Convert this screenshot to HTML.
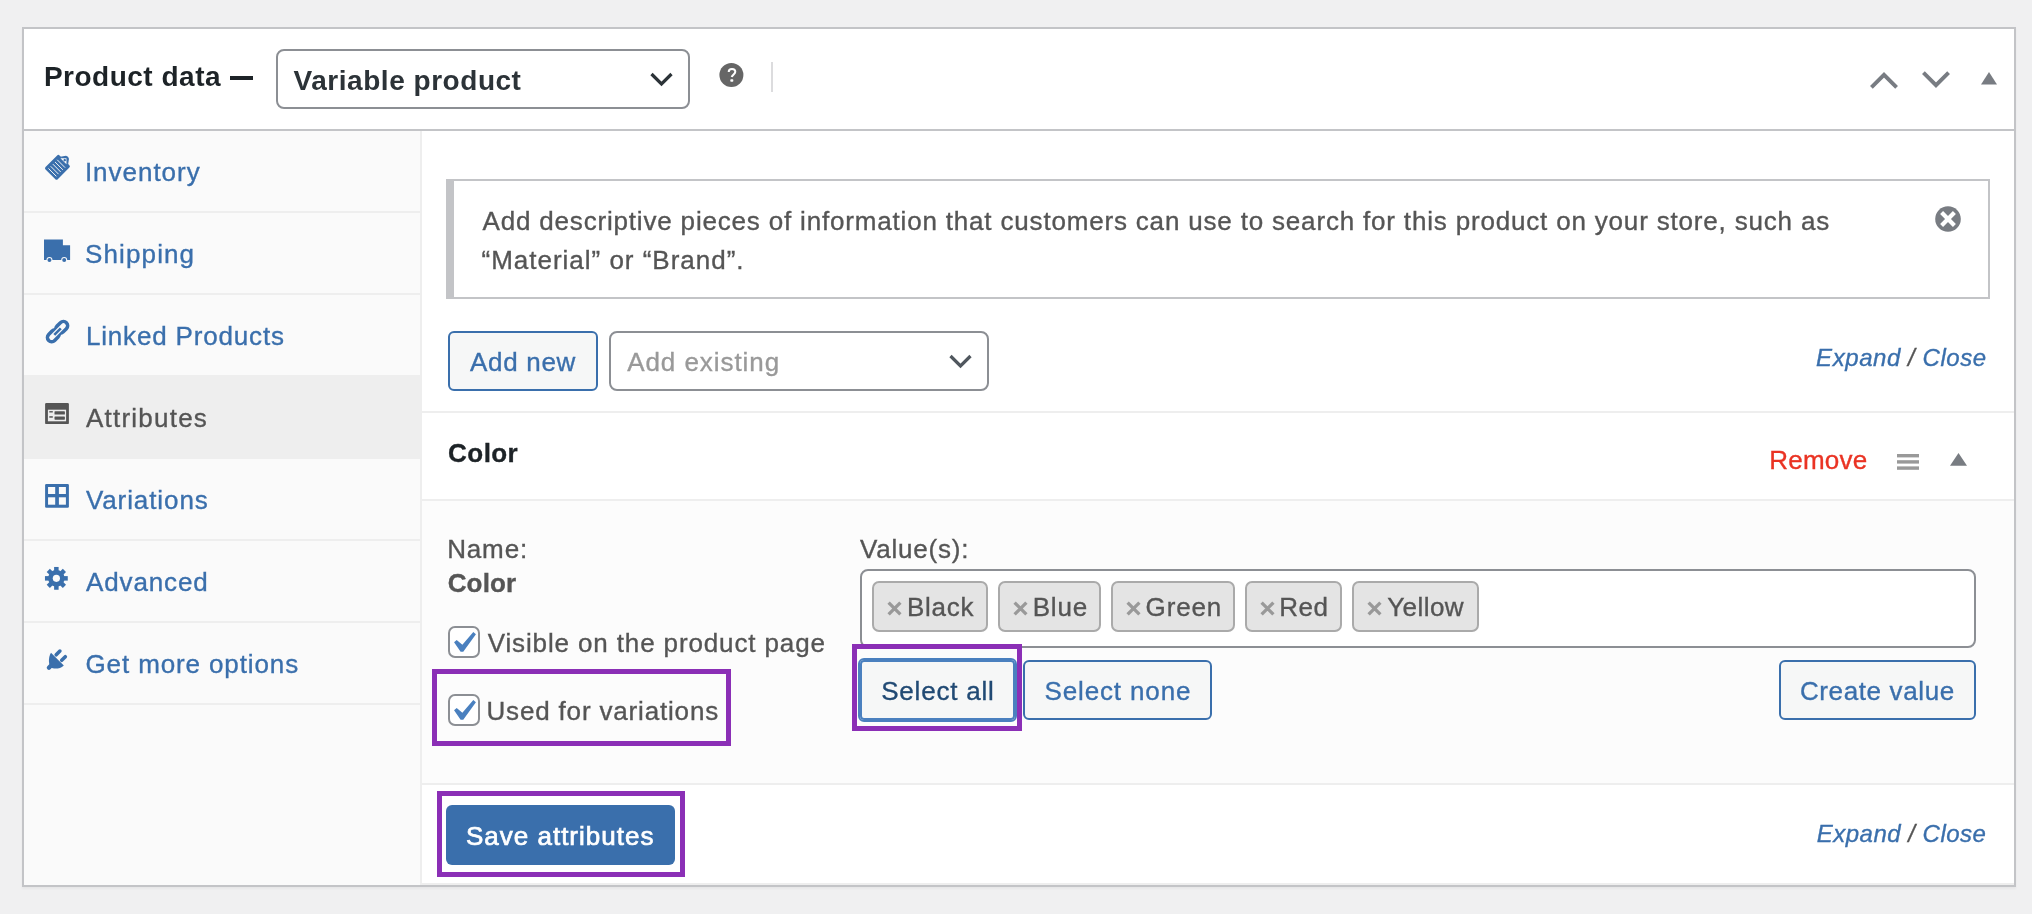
<!DOCTYPE html>
<html><head><meta charset="utf-8">
<style>
*{box-sizing:border-box;margin:0;padding:0}
body{will-change:transform}
html,body{width:2032px;height:914px;overflow:hidden;background:#f0f0f1;font-family:"Liberation Sans",sans-serif}
.a{position:absolute}
.t{position:absolute;white-space:nowrap;line-height:1;-webkit-text-stroke:0.35px currentColor}
#box{left:22px;top:27px;width:1994px;height:860px;border:2px solid #c3c4c7;background:#fff;box-shadow:0 2px 2px rgba(0,0,0,.04)}
#hdr-line{left:24px;top:129px;width:1990px;height:2px;background:#c3c4c7}
#side{left:24px;top:131px;width:398px;height:754px;background:#fafafa;border-right:2px solid #eee}
.tabsep{position:absolute;left:24px;width:396px;height:2px;background:#eee}
.tab{font-size:26px;color:#3a6fac}
.btn{position:absolute;border:2px solid #3a6fac;background:#f6f7f7;border-radius:6px}
.sel{position:absolute;border:2px solid #8c8f94;background:#fff;border-radius:8px}
.purple{position:absolute;border:5px solid #8b2fb6}
.chip{position:absolute;top:581px;height:51px;border:2px solid #aaa;background:#e4e4e4;border-radius:7px}
.chip .x{position:absolute;top:18px;width:15px;height:15px}
.chip .ct{position:absolute;-webkit-text-stroke:0.35px currentColor;top:12px;font-size:26px;line-height:1;color:#555;white-space:nowrap}
</style></head><body>
<div class="a" id="box"></div>
<div class="a" id="hdr-line"></div>

<!-- header -->
<div id="t0" class="t" style="left:43.9px;top:63px;font-size:28px;font-weight:bold;color:#1d2327;letter-spacing:0.50px;-webkit-text-stroke:0">Product data</div>
<div class="a" style="left:230px;top:76px;width:23px;height:4px;background:#1d2327"></div>
<div class="sel" style="left:276px;top:49px;width:414px;height:60px"></div>
<div id="t1" class="t" style="left:293.6px;top:67px;font-size:28px;font-weight:bold;color:#2c3338;letter-spacing:0.53px;-webkit-text-stroke:0">Variable product</div>
<svg class="a" style="left:650px;top:72px" width="24" height="16" viewBox="0 0 24 16"><path d="M1.5 2 L11.5 12 L21.5 2" fill="none" stroke="#2c3338" stroke-width="3.2"/></svg>
<svg class="a" style="left:719px;top:63px" width="25" height="25" viewBox="0 0 25 25"><circle cx="12.4" cy="12" r="12" fill="#666"/><path d="M9.7,9 C9.7,6.9 11.2,5.9 13,5.9 C14.9,5.9 16.3,7.1 16.3,8.8 C16.3,11 13.4,11.6 12.7,14" fill="none" stroke="#fff" stroke-width="2"/><rect x="11.3" y="16.2" width="3" height="2.6" rx=".7" fill="#fff"/></svg>
<div class="a" style="left:771px;top:62px;width:2px;height:30px;background:#dcdcde"></div>
<svg class="a" style="left:1868px;top:70px" width="32" height="20" viewBox="0 0 32 20"><path d="M3.4 17.4 L16 4.8 L28.6 17.4" fill="none" stroke="#787c82" stroke-width="3.9"/></svg>
<svg class="a" style="left:1920px;top:70px" width="32" height="20" viewBox="0 0 32 20"><path d="M3.4 2.6 L16 15.2 L28.6 2.6" fill="none" stroke="#787c82" stroke-width="3.9"/></svg>
<svg class="a" style="left:1980px;top:72px" width="18" height="13" viewBox="0 0 18 13"><path d="M1 12.5 L9 0 L17 12.5 Z" fill="#787c82"/></svg>

<!-- sidebar -->
<div class="a" id="side"></div>
<div class="tabsep" style="top:211px"></div>
<div class="tabsep" style="top:293px"></div>
<div class="a" style="left:24px;top:375px;width:398px;height:84px;background:#eee"></div>
<div class="tabsep" style="top:539px"></div>
<div class="tabsep" style="top:621px"></div>
<div class="tabsep" style="top:703px"></div>

<!-- icons -->
<svg class="a" style="left:40px;top:150px" width="36" height="34" viewBox="0 0 36 34"><g transform="translate(17.45,17.3) rotate(45) scale(1.06)" fill="#3a6fac"><rect x="-8.15" y="-9.35" width="16.3" height="18.7" rx="1.6"/><path d="M-5.2,-9 L-2,-13.4 Q0,-14.8 2,-13.4 L5.2,-9 Z"/><path d="M-4,-8 L0,-12 L4,-8 Z" fill="#fafafa"/><circle cx="0" cy="-9.7" r="1.2"/><g stroke="#fafafa" stroke-width="0.85"><path d="M-5.2,6.75 H5.3 M-5.2,3.85 H5.3 M-5.2,0.95 H5.3 M-5.2,-1.95 H5.3 M-5.2,-4.85 H5.3"/></g></g></svg>
<svg class="a" style="left:40px;top:234px" width="36" height="32" viewBox="0 0 36 32"><path fill="#3a6fac" d="M4,5.6 H22.9 V11.2 H30.1 V25.9 H27.2 A3,3 0 0 0 21.2,25.9 H12.45 A3,3 0 0 0 6.45,25.9 H4 Z"/><circle cx="9.45" cy="25.9" r="2" fill="#3a6fac"/><circle cx="24.2" cy="25.9" r="2" fill="#3a6fac"/></svg>
<svg class="a" style="left:40px;top:315px" width="36" height="34" viewBox="0 0 36 34"><g transform="translate(17.55,16.55) rotate(-45)" fill="#3a6fac"><rect x="-14.3" y="-6" width="16.8" height="12" rx="6"/><rect x="-2.5" y="-6" width="16.8" height="12" rx="6"/><rect x="-10.8" y="-2.5" width="21.6" height="5" rx="2.5" fill="#fafafa"/><rect x="-4.6" y="-1.3" width="9.2" height="2.6"/></g></svg>
<svg class="a" style="left:40px;top:398px" width="36" height="32" viewBox="0 0 36 32"><rect x="5.1" y="5.1" width="23.8" height="21" rx="1.2" fill="#555"/><rect x="7.9" y="11.7" width="18.2" height="11.6" fill="#eee"/><g fill="#555"><rect x="9.3" y="13.1" width="3.5" height="1.4"/><rect x="9.3" y="18.2" width="3.5" height="1.5"/><rect x="14.5" y="13.3" width="10.4" height="3.3" rx=".6"/><rect x="14.5" y="18.4" width="10.4" height="3.3" rx=".6"/></g></svg>
<svg class="a" style="left:40px;top:480px" width="36" height="32" viewBox="0 0 36 32"><rect x="5.1" y="4" width="23.8" height="23.8" rx="1.2" fill="#3a6fac"/><g fill="#fafafa"><rect x="8.05" y="7" width="7.15" height="7"/><rect x="18.9" y="7" width="7" height="7"/><rect x="8.05" y="17.3" width="7.15" height="7.4"/><rect x="18.9" y="17.3" width="7" height="7.4"/></g></svg>
<svg class="a" style="left:40px;top:562px" width="36" height="34" viewBox="0 0 36 34"><g transform="translate(16.36,16.36)" fill="#3a6fac"><circle r="8.3"/><rect x="-2.25" y="-11.4" width="4.5" height="22.8"/><rect x="-2.25" y="-11.4" width="4.5" height="22.8" transform="rotate(45)"/><rect x="-2.25" y="-11.4" width="4.5" height="22.8" transform="rotate(90)"/><rect x="-2.25" y="-11.4" width="4.5" height="22.8" transform="rotate(135)"/><circle r="3.6" fill="#fafafa"/></g></svg>
<svg class="a" style="left:40px;top:644px" width="36" height="32" viewBox="0 0 36 32"><g fill="#3a6fac"><path d="M11,8.8 L23.8,21.4 C20,25 14,25.5 10.3,23.2 C8.2,19 8.6,12.5 11,8.8 Z"/></g><g stroke="#3a6fac" stroke-linecap="round" fill="none"><path d="M10.6,22 L8.9,23.8" stroke-width="4.3"/><path d="M16.2,10.8 L19.9,7.1 M21.7,16.3 L25.3,12.7" stroke-width="3.6"/></g></svg>

<div id="t2" class="t tab" style="left:84.9px;top:159px;letter-spacing:0.98px">Inventory</div>
<div id="t3" class="t tab" style="left:85.1px;top:241px;letter-spacing:1.11px">Shipping</div>
<div id="t4" class="t tab" style="left:85.9px;top:323px;letter-spacing:0.83px">Linked Products</div>
<div id="t5" class="t tab" style="left:86.0px;top:405px;color:#555;letter-spacing:1.22px">Attributes</div>
<div id="t6" class="t tab" style="left:85.9px;top:487px;letter-spacing:0.91px">Variations</div>
<div id="t7" class="t tab" style="left:86.0px;top:569px;letter-spacing:0.86px">Advanced</div>
<div id="t8" class="t tab" style="left:85.5px;top:651px;letter-spacing:0.88px">Get more options</div>

<!-- main -->
<div class="a" style="left:446px;top:179px;width:1544px;height:120px;border:2px solid #c3c4c7;border-left:8px solid #c3c4c7;background:#fff"></div>
<div id="t9" class="t" style="left:482.5px;top:208px;font-size:26px;color:#555;letter-spacing:0.82px">Add descriptive pieces of information that customers can use to search for this product on your store, such as</div>
<div id="t10" class="t" style="left:481.5px;top:247px;font-size:26px;color:#555;letter-spacing:0.99px">“Material” or “Brand”.</div>
<svg class="a" style="left:1935px;top:206px" width="26" height="26" viewBox="0 0 26 26"><circle cx="13" cy="13" r="12.8" fill="#787c82"/><path d="M6.6 6.6 L19.4 19.4 M19.4 6.6 L6.6 19.4" stroke="#fff" stroke-width="4.2"/></svg>

<div class="btn" style="left:448px;top:331px;width:150px;height:60px"></div>
<div id="t11" class="t" style="left:470.0px;top:349px;font-size:26px;color:#3a6fac;letter-spacing:0.70px">Add new</div>
<div class="sel" style="left:609px;top:331px;width:380px;height:60px"></div>
<div id="t12" class="t" style="left:627.2px;top:349px;font-size:26px;color:#999;letter-spacing:0.94px">Add existing</div>
<svg class="a" style="left:949px;top:354px" width="24" height="16" viewBox="0 0 24 16"><path d="M1.5 2 L11.5 12 L21.5 2" fill="none" stroke="#50575e" stroke-width="3.2"/></svg>

<div id="t13" class="t" style="left:1816.1px;top:346px;font-size:24px;font-style:italic;color:#3a6fac;letter-spacing:0.56px">Expand <span style="color:#555">/</span> Close</div>

<div class="a" style="left:422px;top:411px;width:1592px;height:2px;background:#eee"></div>
<div class="a" style="left:422px;top:501px;width:1592px;height:282px;background:#fcfcfc"></div>
<div class="a" style="left:422px;top:499px;width:1592px;height:2px;background:#eee"></div>
<div class="a" style="left:422px;top:783px;width:1592px;height:2px;background:#eee"></div>

<div id="t14" class="t" style="left:448.1px;top:440px;font-size:26px;font-weight:bold;color:#1d2327;letter-spacing:0.44px">Color</div>
<div id="t15" class="t" style="left:1769.3px;top:447px;font-size:26px;color:#ea3323;letter-spacing:0.22px">Remove</div>
<svg class="a" style="left:1897px;top:454px" width="22" height="16" viewBox="0 0 22 16"><rect x="0" y="0" width="22" height="3.4" fill="#999"/><rect x="0" y="6.2" width="22" height="3.4" fill="#999"/><rect x="0" y="12.4" width="22" height="3.4" fill="#999"/></svg>
<svg class="a" style="left:1949px;top:453px" width="19" height="13" viewBox="0 0 19 13"><path d="M1 12.8 L9.5 0 L18 12.8 Z" fill="#787c82"/></svg>

<div id="t16" class="t" style="left:447.2px;top:536px;font-size:26px;color:#555;letter-spacing:0.85px">Name:</div>
<div id="t17" class="t" style="left:447.7px;top:570px;font-size:26px;font-weight:bold;color:#555;letter-spacing:0.16px">Color</div>

<svg class="a" style="left:448px;top:626px" width="33" height="33" viewBox="0 0 33 33"><rect x="1" y="1" width="30" height="30" rx="6" fill="#fff" stroke="#8c8f94" stroke-width="2"/><path d="M6.06,16.34 L8.69,13.94 L14.37,18.75 L25.3,6.06 L27.93,8.25 L15.25,25.75 L12.62,25.75 Z" fill="#4a80bf"/></svg>
<div id="t18" class="t" style="left:487.7px;top:630px;font-size:26px;color:#555;letter-spacing:0.87px">Visible on the product page</div>
<svg class="a" style="left:448px;top:694px" width="33" height="33" viewBox="0 0 33 33"><rect x="1" y="1" width="30" height="30" rx="6" fill="#fff" stroke="#8c8f94" stroke-width="2"/><path d="M6.06,16.34 L8.69,13.94 L14.37,18.75 L25.3,6.06 L27.93,8.25 L15.25,25.75 L12.62,25.75 Z" fill="#4a80bf"/></svg>
<div id="t19" class="t" style="left:486.5px;top:698px;font-size:26px;color:#555;letter-spacing:0.83px">Used for variations</div>

<div id="t20" class="t" style="left:860.1px;top:536px;font-size:26px;color:#555;letter-spacing:0.79px">Value(s):</div>
<div class="sel" style="left:860px;top:569px;width:1116px;height:79px"></div>

<div class="chip" style="left:872px;width:116px"><svg class="x" style="left:13px" viewBox="0 0 15 15"><path d="M1.6 1.6 L13.4 13.4 M13.4 1.6 L1.6 13.4" stroke="#999" stroke-width="3.3"/></svg><div id="t21" class="ct" style="left:33.0px;top:11px;letter-spacing:0.70px">Black</div></div>
<div class="chip" style="left:998px;width:103px"><svg class="x" style="left:13px" viewBox="0 0 15 15"><path d="M1.6 1.6 L13.4 13.4 M13.4 1.6 L1.6 13.4" stroke="#999" stroke-width="3.3"/></svg><div id="t22" class="ct" style="left:32.7px;top:11px;letter-spacing:0.83px">Blue</div></div>
<div class="chip" style="left:1111px;width:124px"><svg class="x" style="left:13px" viewBox="0 0 15 15"><path d="M1.6 1.6 L13.4 13.4 M13.4 1.6 L1.6 13.4" stroke="#999" stroke-width="3.3"/></svg><div id="t23" class="ct" style="left:32.6px;top:11px;letter-spacing:0.86px">Green</div></div>
<div class="chip" style="left:1245px;width:97px"><svg class="x" style="left:13px" viewBox="0 0 15 15"><path d="M1.6 1.6 L13.4 13.4 M13.4 1.6 L1.6 13.4" stroke="#999" stroke-width="3.3"/></svg><div id="t24" class="ct" style="left:32.3px;top:11px;letter-spacing:0.45px">Red</div></div>
<div class="chip" style="left:1352px;width:127px"><svg class="x" style="left:13px" viewBox="0 0 15 15"><path d="M1.6 1.6 L13.4 13.4 M13.4 1.6 L1.6 13.4" stroke="#999" stroke-width="3.3"/></svg><div id="t25" class="ct" style="left:33.2px;top:11px;letter-spacing:0.44px">Yellow</div></div>

<div class="btn" style="left:858px;top:658px;width:159px;height:64px;border:2px solid #4a80bf;box-shadow:inset 0 0 0 2px #4a80bf"></div>
<div id="t26" class="t" style="left:881.2px;top:678px;font-size:26px;color:#214a74;letter-spacing:0.79px">Select all</div>
<div class="btn" style="left:1023px;top:660px;width:189px;height:60px"></div>
<div id="t27" class="t" style="left:1044.5px;top:678px;font-size:26px;color:#3a6fac;letter-spacing:0.86px">Select none</div>
<div class="btn" style="left:1779px;top:660px;width:197px;height:60px"></div>
<div id="t28" class="t" style="left:1799.9px;top:678px;font-size:26px;color:#3a6fac;letter-spacing:0.63px">Create value</div>

<div class="a" style="left:446px;top:805px;width:229px;height:60px;background:#3a6fac;border-radius:6px"></div>
<div id="t29" class="t" style="left:465.9px;top:823px;font-size:26px;color:#fff;letter-spacing:1.01px;-webkit-text-stroke:0.7px #fff">Save attributes</div>
<div id="t30" class="t" style="left:1816.7px;top:822px;font-size:24px;font-style:italic;color:#3a6fac;letter-spacing:0.50px">Expand <span style="color:#555">/</span> Close</div>
<div class="a" style="left:422px;top:883px;width:1592px;height:2px;background:#eee"></div>

<div class="purple" style="left:432px;top:669px;width:299px;height:77px"></div>
<div class="purple" style="left:852px;top:644px;width:170px;height:87px"></div>
<div class="purple" style="left:437px;top:791px;width:248px;height:86px"></div>

</body></html>
